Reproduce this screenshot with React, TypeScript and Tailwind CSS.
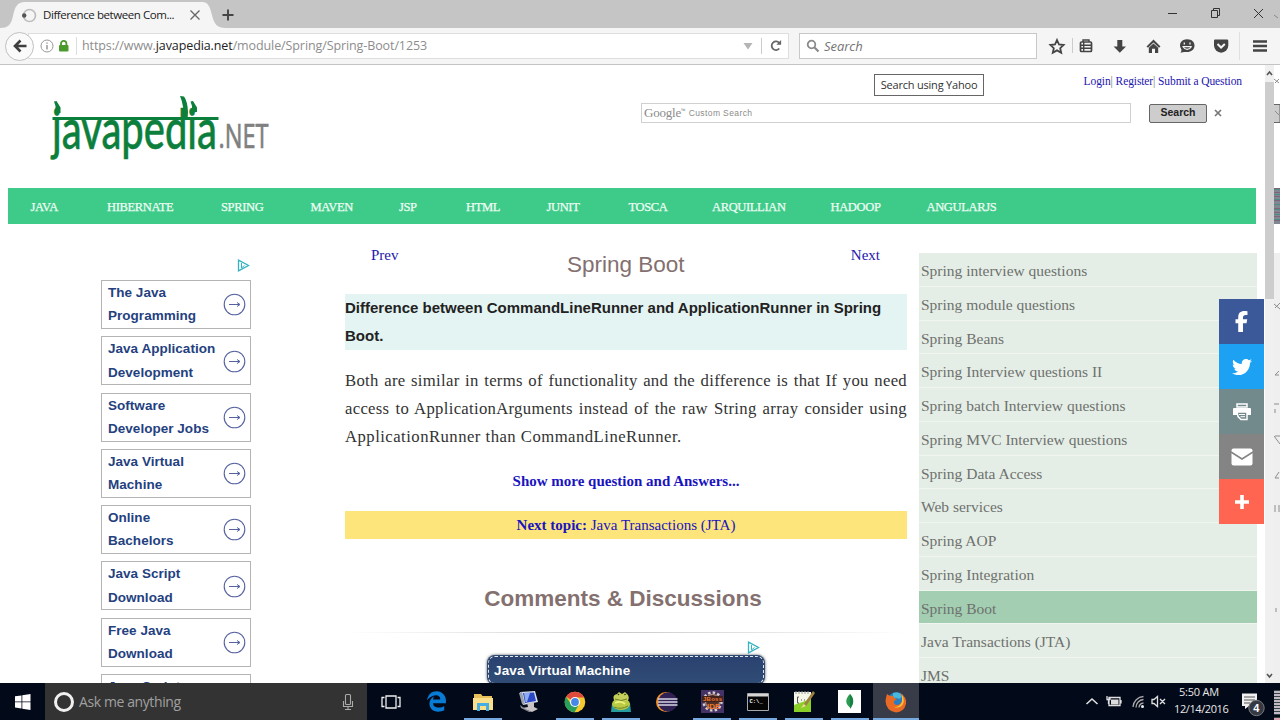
import type { ReactNode } from "react";
import { FaEdgeLegacy, FaFacebookF, FaTwitter } from "react-icons/fa6";

const navItems = ["JAVA", "HIBERNATE", "SPRING", "MAVEN", "JSP", "HTML", "JUNIT", "TOSCA", "ARQUILLIAN", "HADOOP", "ANGULARJS"];

const adLinks = [
  ["The Java", "Programming"],
  ["Java Application", "Development"],
  ["Software", "Developer Jobs"],
  ["Java Virtual", "Machine"],
  ["Online", "Bachelors"],
  ["Java Script", "Download"],
  ["Free Java", "Download"],
  ["Java Script"],
];

const modules = [
  "Spring interview questions",
  "Spring module questions",
  "Spring Beans",
  "Spring Interview questions II",
  "Spring batch Interview questions",
  "Spring MVC Interview questions",
  "Spring Data Access",
  "Web services",
  "Spring AOP",
  "Spring Integration",
  "Spring Boot",
  "Java Transactions (JTA)",
  "JMS",
];

function TabBar() {
  return (
    <div className="relative flex h-7 shrink-0 items-center bg-[#c5c5c5]">
      <svg className="absolute left-0 top-0" width="226" height="28" viewBox="0 0 226 28">
        <path d="M0 28C8 28 11 25 13 16C15 7 17 2 25 2H202C209 2 210 8 212 15C214 24 217 28 226 28Z" fill="#f5f5f5" />
      </svg>
      <div className="relative flex h-7 w-full items-center pl-[22px] pt-[2px]">
        <svg width="15" height="15" viewBox="0 0 15 15" fill="none">
          <circle cx="7.5" cy="7.5" r="6" stroke="#bdbdbd" strokeWidth="1.7" />
          <circle cx="2.2" cy="7.5" r="2.2" fill="#555" />
        </svg>
        <span className="ml-[6px] w-[146px] whitespace-nowrap text-[11.5px] tracking-[-0.43px] text-[#222]">Difference between Com...</span>
        <svg width="12" height="12" viewBox="0 0 12 12" stroke="#666" strokeWidth="1.3">
          <path d="M1.5 1.5L10.5 10.5M10.5 1.5L1.5 10.5" />
        </svg>
        <svg className="ml-[21px]" width="12" height="12" viewBox="0 0 12 12" stroke="#444" strokeWidth="1.9">
          <path d="M6 0.5V11.5M0.5 6H11.5" />
        </svg>
        <svg className="-mt-[5px] ml-auto" width="114" height="16" viewBox="0 0 114 16" fill="none" stroke="#333" strokeWidth="1">
          <path d="M2 8.5H11M45.500 5.500H51.500V12.500H45.500ZM47.500 5.500V3.500H53.500V10.500H51.500M88 4L97 13M97 4L88 13" />
          <path d="M108 10L112 13" stroke="#888" />
        </svg>
      </div>
    </div>
  );
}

function ToolbarIcons() {
  return (
    <svg className="ml-[11px]" width="232" height="34" viewBox="1048 29 232 34" fill="none" stroke="#444">
      <path d="M1057 40L1059 44.5L1063.6 45L1060.2 48.2L1061.2 52.8L1057 50.4L1052.8 52.8L1053.8 48.2L1050.4 45L1055 44.5Z" strokeWidth="1.8" />
      <path d="M1072.5 38V53" stroke="#ccc" />
      <rect x="1080.5" y="42" width="11" height="9.5" rx="1" strokeWidth="1.7" />
      <path d="M1083 42V40H1089V42M1080.5 45.2H1091.5M1080.5 48.3H1091.5M1083.7 42V51" strokeWidth="1.4" />
      <path d="M1117.3 40H1122.3V46.5H1126L1119.8 52.8L1113.6 46.5H1117.3Z" fill="#444" stroke="none" />
      <path d="M1153.5 39.5L1160.5 46.5L1159 47.7L1153.5 42.5L1148 47.7L1146.5 46.5Z" fill="#444" stroke="none" />
      <path d="M1148.8 47.8L1153.5 43.5L1158.2 47.8V53H1155V48.7H1152V53H1148.8Z" fill="#444" stroke="none" />
      <path d="M1187.2 39.3C1192 39.3 1194.5 42.2 1194.5 45.7C1194.5 49.5 1191 52 1187.2 52C1185 52 1184 52 1180.4 52.8C1181.5 51.5 1181.5 50.5 1181.3 49.3C1178 44 1181.5 39.3 1187.2 39.3Z" fill="#444" stroke="none" />
      <path d="M1184.3 42.5V44.5M1190 42.5V44.5M1182.5 46.7H1191.8" stroke="#f5f5f5" strokeWidth="1.3" />
      <path d="M1183.3 47C1185 50.2 1189.5 50.2 1191 47" stroke="#f5f5f5" strokeWidth="1.1" />
      <path d="M1215 39.6H1227Q1228.3 39.6 1228.3 41V45.5A7 7 0 0 1 1214 45.5V41Q1214 39.6 1215 39.6Z" fill="#444" stroke="none" />
      <path d="M1217.5 44L1221.1 47.5L1224.8 44" stroke="#f5f5f5" strokeWidth="2" />
      <path d="M1253 41.5H1267M1253 46H1267M1253 50.5H1267" strokeWidth="2.5" />
      <path d="M1239.500 32V60" stroke="#e0e0e0" />
    </svg>
  );
}

function Toolbar() {
  return (
    <div className="flex h-[37px] shrink-0 items-center border-b border-[#c4c4c4] bg-[#f5f5f5] pl-[5px]">
      <div className="z-10 flex size-[29px] shrink-0 items-center justify-center rounded-full border border-[#c0c0c0] bg-[#fafafa]">
        <svg width="14" height="14" viewBox="0 0 14 14" fill="none" stroke="#3f3f3f" strokeWidth="2.6">
          <path d="M7.5 1.5L2 7L7.5 12.5M2.5 7H13.5" />
        </svg>
      </div>
      <div className="-ml-[6px] flex h-[26px] w-[761px] shrink-0 items-center border border-[#dedede] bg-white pl-[11px]">
        <svg width="30" height="16" viewBox="0 0 30 16" fill="none">
          <circle cx="7" cy="8" r="6" stroke="#999" />
          <path d="M7 7V11.5M7 4.5V5.8" stroke="#888" strokeWidth="1.3" />
          <path d="M21 8V5.5A2.7 2.7 0 0 1 26.4 5.5V8" stroke="#4a9a2c" strokeWidth="1.8" />
          <rect x="19" y="7" width="9.5" height="6.5" rx="1" fill="#4a9a2c" />
        </svg>
        <div className="ml-[6px] h-[18px] w-px bg-[#ddd]" />
        <span className="ml-[5px] mt-px whitespace-nowrap text-[12.5px] tracking-[-0.1px] text-[#8d8d8d]">
          https://www.<span className="text-[#222]">javapedia.net</span>/module/Spring/Spring-Boot/1253
        </span>
        <svg className="ml-auto mr-[-1px]" width="46" height="20" viewBox="0 0 46 20" fill="none">
          <path d="M0.500 7H9.500L5 13.500Z" fill="#b5b5b5" />
          <path d="M18.500 2V18" stroke="#ccc" />
          <path d="M36.300 7A4.300 4.300 0 1 0 36.300 12.500" stroke="#666" strokeWidth="1.800" />
          <path d="M33.300 8.800H38.100V4Z" fill="#666" />
        </svg>
      </div>
      <div className="ml-[10px] flex h-[26px] w-[238px] shrink-0 items-center border border-[#c8c8c8] bg-white pl-[6px]">
        <svg width="14" height="14" viewBox="0 0 14 14" fill="none" stroke="#8a8a8a">
          <circle cx="5.500" cy="5.500" r="3.800" strokeWidth="1.800" />
          <path d="M8.300 8.300L12.500 12.500" strokeWidth="2.200" />
        </svg>
        <span className="ml-[4px] mt-px text-[13px] italic tracking-[-0.050px] text-[#757575]">Search</span>
      </div>
      <ToolbarIcons />
    </div>
  );
}

function Logo() {
  return (
    <svg className="ml-[40px] mt-[20px]" width="230" height="84" viewBox="48 85 230 84">
      <text x="52" y="148.500" fontSize="56" fontFamily="Lato, sans-serif" fontWeight="500" fill="#0d7f3d" stroke="#0d7f3d" strokeWidth="0.500" textLength="165" lengthAdjust="spacingAndGlyphs">javapedia</text>
      <path d="M52.500 118.600H218.500" stroke="#0d7f3d" strokeWidth="3" />
      <path d="M54 101.500L56.500 101L60.500 107.500V113H55.500V106ZM190.500 101.500L193 101L197 107.500V112H192V106ZM180 96L184 96.500Q187.500 101 188 112L187.500 120H183.800Q184 105 180 96Z" fill="#0d7f3d" />
      <text x="218.500" y="148" fontSize="33" fontFamily="Open Sans, sans-serif" fill="#808080" stroke="#808080" strokeWidth="0.700" textLength="50" lengthAdjust="spacingAndGlyphs">.NET</text>
    </svg>
  );
}

function PageHeader() {
  return (
    <div className="flex h-[123px] shrink-0 justify-between">
      <Logo />
      <div className="flex w-[616px] flex-col pl-[8px]">
        <div className="flex h-[31px] items-start justify-between pl-[225px]">
          <div className="mt-[9px] flex h-[22px] w-[110px] items-center justify-center whitespace-nowrap border border-[#666] bg-white text-[11px] tracking-[-0.200px] text-[#333]">
            Search using Yahoo
          </div>
          <div className="mr-[15px] mt-[7px] whitespace-nowrap font-['Liberation_Serif',serif] text-[11.500px] leading-[18px] tracking-[-0.100px] text-[#777]">
            <span className="text-[#2416b0]">Login</span>| <span className="text-[#2416b0]">Register</span>| <span className="text-[#2416b0]">Submit a Question</span>
          </div>
        </div>
        <div className="mt-[7px] flex items-center">
          <div className="-ml-[8px] flex h-[20px] w-[490px] shrink-0 items-center border border-[#d0d0d0] bg-white pl-[2px] text-[#8b8b8b]">
            <span className="font-['Liberation_Serif',serif] text-[13px] tracking-[-0.200px]">Google</span>
            <span className="-mt-[4px] text-[6px]">™</span>
            <span className="ml-[3px] mt-px font-['Liberation_Sans',sans-serif] text-[8.500px] tracking-[0.400px]">Custom Search</span>
          </div>
          <div className="ml-[18px] flex h-[19px] w-[58px] shrink-0 items-center justify-center rounded-[2px] border border-[#666] bg-[#cdcdcd] font-['Liberation_Sans',sans-serif] text-[10.500px] font-bold text-[#222]">Search</div>
          <svg className="ml-[7px]" width="8" height="8" viewBox="0 0 8 8" stroke="#777" strokeWidth="1.700">
            <path d="M1 1L7 7M7 1L1 7" />
          </svg>
        </div>
      </div>
    </div>
  );
}

function AdChoices() {
  return (
    <svg width="13" height="13" viewBox="0 0 13 13" fill="none" stroke="#35b3c4" strokeWidth="1.300">
      <path d="M1.500 1.200V11.800L11.500 6.500Z" />
      <path d="M4.500 4V9L7.500 6.500" strokeWidth="1" />
    </svg>
  );
}

function AdColumn() {
  return (
    <div className="flex w-[150px] shrink-0 flex-col pt-[35px]">
      <div className="flex h-[21px] justify-end pr-[1px]">
        <AdChoices />
      </div>
      <div className="flex flex-col gap-[7.250px]">
        {adLinks.map(([a, b], i) => (
          <div key={i} className="flex h-[49px] shrink-0 justify-between border border-[#b4b4b4] pl-[6px] pr-[4px] font-['Liberation_Sans',sans-serif] text-[13.500px] font-bold leading-[23.400px] text-[#24417f]">
            <div className="whitespace-nowrap tracking-[0.030px]">
              <div>{a}</div>
              <div>{b}</div>
            </div>
            <svg className="mt-[12.400px]" width="23" height="23" viewBox="0 0 23 23" fill="none" stroke="#5663a0">
              <circle cx="11.500" cy="11.500" r="10.300" strokeWidth="1.100" />
              <path d="M6 11.500H16.500M14 9.500L17 11.500L14 13.500" strokeWidth="1" />
            </svg>
          </div>
        ))}
      </div>
    </div>
  );
}

function Article() {
  return (
    <div className="ml-[94px] flex w-[562px] shrink-0 flex-col font-['Liberation_Serif',serif] text-[#333]">
      <div className="flex h-[70px] justify-between pl-[26px] pr-[27px] pt-[20px] text-[15px] leading-[22px] text-[#2416b0]">
        <span>Prev</span>
        <h1 className="ml-[2px] mt-[6px] font-['Liberation_Sans',sans-serif] text-[22.500px] leading-[29px] text-[#83706f]">Spring Boot</h1>
        <span>Next</span>
      </div>
      <h2 className="h-[56px] bg-[#e4f4f2] font-['Liberation_Sans',sans-serif] text-[15px] font-bold leading-[28px] text-[#222]">
        Difference between CommandLineRunner and ApplicationRunner in Spring Boot.
      </h2>
      <div className="mt-[17px] whitespace-nowrap text-[16.700px] leading-[28px]">
        <p className="tracking-[0.300px] [text-align-last:justify]">Both are similar in terms of functionality and the difference is that If you need</p>
        <p className="tracking-[0.300px] [text-align-last:justify]">access to ApplicationArguments instead of the raw String array consider using</p>
        <p className="tracking-[0.470px]">ApplicationRunner than CommandLineRunner.</p>
      </div>
      <div className="mt-[16px] text-center text-[15px] font-bold leading-[28px] text-[#1a14c0]">Show more question and Answers...</div>
      <div className="mt-[16px] h-[28px] bg-[#fde57b] text-center text-[15px] leading-[28px] text-[#1a14c0]">
        <b>Next topic:</b> Java Transactions (JTA)
      </div>
      <h2 className="mt-[46px] pr-[6px] text-center font-['Liberation_Sans',sans-serif] text-[22.500px] font-bold leading-[28px] text-[#83706f]">Comments &amp; Discussions</h2>
      <div className="mt-[19px] h-px w-full bg-linear-to-r from-transparent via-[#ccc] to-transparent" />
      <div className="flex justify-end pr-[147px] pt-[8px]">
        <AdChoices />
      </div>
      <div className="ml-[142px] mt-[1px] h-[30px] w-[278px] shrink-0 rounded-[8px] bg-[#2e4a74] p-px shadow-[0_0_3px_#555]">
        <div className="h-full rounded-[7px] border-[1.500px] border-dashed border-[#dfe5ee] bg-linear-to-b from-[#2a4270] to-[#304c75] pl-[5px] font-['Liberation_Sans',sans-serif] text-[13.500px] font-bold leading-[27px] tracking-[0.150px] text-white">
          Java Virtual Machine
        </div>
      </div>
    </div>
  );
}

function ModuleList() {
  return (
    <div className="ml-[12px] mt-[29px] w-[338px] shrink-0 font-['Liberation_Serif',serif] text-[15.500px] text-[#6e716e]">
      {modules.map((m) => (
        <div
          key={m}
          className={`h-[33.750px] whitespace-nowrap border-b border-[#f0f5f0] pl-[2px] leading-[35px] ${m === "Spring Boot" ? "bg-[#a3ceb2]" : "bg-[#e5eee6]"}`}
        >
          {m}
        </div>
      ))}
    </div>
  );
}

function ShareBar() {
  return (
    <div className="absolute left-[1219px] top-[299px] flex w-[45px] flex-col text-white">
      <div className="flex h-[45px] items-center justify-center bg-[#3b5998]"><FaFacebookF size={21} /></div>
      <div className="flex h-[45px] items-center justify-center bg-[#1da1f2]"><FaTwitter size={20} /></div>
      <div className="flex h-[45px] items-center justify-center bg-[#738a8d]">
        <svg width="20" height="18" viewBox="0 0 20 18" fill="none">
          <path d="M5 1H15V4H5Z" stroke="white" strokeWidth="1.500" />
          <path d="M2 5H18Q19 5 19 6V12H1V6Q1 5 2 5Z" fill="white" />
          <path d="M5 9H15V16.500H9L6 13.500Z" fill="#738a8d" stroke="white" strokeWidth="1.500" />
          <path d="M7 11.500H13M8.500 13.700H13" stroke="white" />
        </svg>
      </div>
      <div className="flex h-[45px] items-center justify-center bg-[#848484]">
        <svg width="22" height="18" viewBox="0 0 22 18">
          <rect x="0.500" y="0.500" width="21" height="17" rx="2" fill="white" />
          <path d="M0 4L11 11L22 4" fill="none" stroke="#848484" strokeWidth="1.500" />
        </svg>
      </div>
      <div className="flex h-[45px] items-center justify-center bg-[#ff6550]">
        <svg width="16" height="16" viewBox="0 0 16 16" stroke="white" strokeWidth="3.600"><path d="M8 1V15M1 8H15" /></svg>
      </div>
    </div>
  );
}

function Scrollbar() {
  return (
    <div className="flex w-[9px] shrink-0 flex-col items-center justify-between bg-[#f0f0f0]">
      <div className="flex w-full flex-col items-center">
        <svg className="my-[5px]" width="7" height="7" viewBox="0 0 7 7" fill="none" stroke="#555" strokeWidth="1.600"><path d="M1 5L3.500 2L6 5" /></svg>
        <div className="h-[217px] w-full bg-[#cdcdcd]" />
      </div>
      <svg className="mb-[4px]" width="7" height="7" viewBox="0 0 7 7" fill="none" stroke="#555" strokeWidth="1.600"><path d="M1 2L3.500 5L6 2" /></svg>
    </div>
  );
}

function EdgeStrip() {
  return (
    <svg className="shrink-0" width="6" height="618" viewBox="1274 65 6 618" fill="none">
      <path d="M1274 65H1280V683H1274Z" fill="#fff" />
      <path d="M1274 253H1280V683H1274Z" fill="#efefef" />
      <path d="M1274 104.500H1280V122.500H1274" fill="#ccc" stroke="#666" />
      <path d="M1277 188V224" stroke="#808790" strokeWidth="6" />
      <path d="M1277 188V224" stroke="#7d6480" strokeWidth="6" strokeDasharray="1 3" />
      <path d="M1277 189V224" stroke="#4d8c83" strokeWidth="6" strokeDasharray="1 4" />
      <path d="M1274 79L1279 83M1279 79L1275 83M1275 111L1279 115M1274 304L1280 309M1280 303L1275 308M1279 371L1275 375H1279M1274 404H1279M1275 409V413M1274 436L1280 444M1280 436H1275M1279 472L1275 478H1279M1275 505V512M1279 505V512M1276 608V612" stroke="#8d8d8d" />
    </svg>
  );
}

function TaskIcon({ children, running = false, active = false }: { children: ReactNode; running?: boolean; active?: boolean }) {
  return (
    <div className={`flex h-[37px] w-[45.900px] shrink-0 flex-col items-center ${active ? "bg-[#383c49]" : ""}`}>
      <div className="flex h-[35px] items-center justify-center pt-[2px]">{children}</div>
      <div className={`h-[2px] ${active ? "w-full" : "w-[38px]"} ${running || active ? "bg-[#76a9df]" : ""}`} />
    </div>
  );
}

function Taskbar() {
  return (
    <div className="flex h-[37px] shrink-0 bg-[#020918] text-white">
      <div className="flex w-[45px] shrink-0 items-center justify-center">
        <svg width="16" height="16" viewBox="0 0 16 16" fill="white"><path d="M0 2.300L6.500 1.400V7.500H0ZM7.300 1.300L15.500 0V7.500H7.300ZM0 8.300H6.500V14.500L0 13.600ZM7.300 8.300H15.500V16L7.300 14.700Z" /></svg>
      </div>
      <div className="flex w-[322px] shrink-0 items-center bg-[#333] pl-[9px] pr-[12px]">
        <div className="size-[20px] rounded-full border-[3px] border-[#f0f0f0]" />
        <span className="ml-[5px] text-[14px] tracking-[-0.400px] text-[#a0a0a0]">Ask me anything</span>
        <svg className="ml-auto" width="14" height="18" viewBox="0 0 14 18" fill="none" stroke="#aaa" strokeWidth="1.100">
          <rect x="4.500" y="1.500" width="5" height="10" rx="1" />
          <path d="M2.500 8V13.500H11.500V8M7 13.500V16.500M4 16.500H10" />
        </svg>
      </div>
      <div className="flex w-[47px] shrink-0 items-center justify-center">
        <svg width="20" height="16" viewBox="0 0 20 16" fill="none" stroke="#eee" strokeWidth="1.300">
          <path d="M5 2H15V14H5ZM3.500 3.500H1V12.500H3.500M16.500 3.500H19V12.500H16.500" />
        </svg>
      </div>
      <TaskIcon><FaEdgeLegacy size={21} color="#087bd5" /></TaskIcon>
      <TaskIcon running>
        <svg width="20" height="20" viewBox="0 0 20 20">
          <path d="M1 2H8L9.500 4H19V18H1Z" fill="#e8c05a" />
          <path d="M0 6H20V18H0Z" fill="#fbe08b" />
          <path d="M4 19V11H16V19H13V14H7V19Z" fill="#46aee3" />
        </svg>
      </TaskIcon>
      <TaskIcon>
        <svg width="22" height="23" viewBox="0 0 22 23">
          <path d="M2 2L17 1L20 12L5 15Z" fill="#d9dfed" />
          <path d="M5 3L16 2.500L18 11L7 13Z" fill="#2a48c8" />
          <path d="M6 3L12 3L9 12L7.500 12Z" fill="#8eabef" />
          <path d="M1 3L4 2L7 15L4 14Z" fill="#9a9fae" />
          <path d="M9 13L16 12V17L20 19L14 22L4 18L10 17Z" fill="#c8c4c5" />
          <path d="M2 15L9 20L14 22L11 22L3 18Z" fill="#8d8b92" />
        </svg>
      </TaskIcon>
      <TaskIcon running>
        <svg width="22" height="22" viewBox="0 0 22 22">
          <circle cx="11" cy="11" r="10.300" fill="#f5c82e" />
          <path d="M11 11L2 5.800A10.300 10.300 0 0 1 20.200 6.500H11Z" fill="#de4a3b" />
          <path d="M2 5.800A10.300 10.300 0 0 0 10.500 21.300L15 13.500L11 11L7 13Z" fill="#2a9f5c" />
          <circle cx="11" cy="11" r="5" fill="white" />
          <circle cx="11" cy="11" r="3.900" fill="#4787e8" />
        </svg>
      </TaskIcon>
      <TaskIcon running>
        <svg width="22" height="22" viewBox="0 0 22 22">
          <path d="M2 12H20L21 21H1Z" fill="#279c9c" />
          <ellipse cx="11" cy="13" rx="9" ry="6" fill="#b9c943" />
          <path d="M4 9Q2 4 7 3L9 1L12 3L15 1L18 4Q20 8 17 10Z" fill="#c3cf58" />
          <path d="M5 8Q11 11 17 8M4 16Q11 19 18 15" stroke="#71832c" strokeWidth="1" fill="none" />
          <circle cx="8.500" cy="3.500" r="0.800" fill="#283513" />
          <circle cx="15" cy="3.500" r="0.800" fill="#283513" />
          <path d="M5 12Q11 9 15 13" stroke="#eaf07a" strokeWidth="1.800" fill="none" />
        </svg>
      </TaskIcon>
      <TaskIcon>
        <svg width="23" height="22" viewBox="0 0 23 22">
          <circle cx="11" cy="11" r="10" fill="#f0922c" />
          <circle cx="12.800" cy="11" r="9.700" fill="#302154" />
          <path d="M3 8H22.500M3 11H22.500M3 14H22.500" stroke="#d5d5e3" strokeWidth="1.600" />
        </svg>
      </TaskIcon>
      <TaskIcon running>
        <svg width="23" height="23" viewBox="0 0 23 23">
          <path d="M0 0H23V23H0Z" fill="#443266" />
          <circle cx="11.500" cy="11.500" r="9" fill="none" stroke="#d8ceca" strokeWidth="2.500" strokeDasharray="2.500 2.200" />
          <circle cx="11.500" cy="11.500" r="7" fill="#503026" stroke="#c2a18a" />
          <path d="M1 6H22V12H1Z" fill="#40221d" />
          <text x="2" y="11" fontSize="6" fontFamily="Liberation Sans, sans-serif" fontWeight="bold" fill="#ee7730" textLength="19">JBoss</text>
          <text x="6" y="19" fontSize="8" fontFamily="Liberation Sans, sans-serif" fontWeight="bold" fill="#ef792d">IDE</text>
        </svg>
      </TaskIcon>
      <TaskIcon running>
        <svg width="22" height="18" viewBox="0 0 22 18">
          <path d="M0.500 0.500H21.500V17.500H0.500Z" fill="#050505" stroke="#aaa" />
          <path d="M1 1H21V3.500H1Z" fill="#d5d5d5" />
          <text x="2.500" y="9.500" fontSize="5.500" fontFamily="Liberation Mono, monospace" fontWeight="bold" fill="white">C:\_</text>
        </svg>
      </TaskIcon>
      <TaskIcon running>
        <svg width="22" height="23" viewBox="0 0 22 23">
          <path d="M1 2H18V22H1Z" fill="#f5f8e8" />
          <path d="M1 15L18 9V22H1Z" fill="#8bcf29" />
          <path d="M3 1V4M6 1V4M9 1V4M12 1V4M15 1V4" stroke="#999" />
          <path d="M6 7H4.500V13H6M8 10H9M11 10H12" stroke="#555" fill="none" />
          <path d="M20 1L22 3L13 16L10 17L11 14Z" fill="#9d8242" />
          <path d="M8 18L11 14L13 16Z" fill="#f1df98" />
        </svg>
      </TaskIcon>
      <TaskIcon running>
        <svg width="23" height="23" viewBox="0 0 23 23">
          <path d="M0 0H23V23H0Z" fill="white" />
          <path d="M12 4C7 9 7 14 12 17.500C16 14 16.500 9 12 4Z" fill="#2a9c50" />
          <path d="M12 4V19C16 14 16.500 9 12 4Z" fill="#188043" />
        </svg>
      </TaskIcon>
      <TaskIcon active>
        <svg width="22" height="22" viewBox="0 0 22 22">
          <circle cx="11.500" cy="10" r="9" fill="#297fc0" />
          <path d="M8 2Q14 0 18 5L14 8Q11 6 8 7Z" fill="#49b9db" />
          <path d="M2 3L5 5Q9 4 9 7L12 8L9 10Q8 14 13 14Q18 12 17 6L15 2Q22 6 21 13Q19 21 11 21.500Q1 20 0.500 10Q1 6 2 3Z" fill="#e96a24" />
          <path d="M17 4Q20 8 18 13Q15 18 9 16Q15 16 17 11Z" fill="#f8c13e" />
        </svg>
      </TaskIcon>
      <div className="flex grow items-center">
        <svg className="ml-auto" width="84" height="24" viewBox="1084 690 84 24" fill="none" stroke="#e0e0e0" strokeWidth="1.300">
          <path d="M1086.500 704L1092 699L1097.500 704" strokeWidth="1.600" />
          <path d="M1109 697.500H1120V705.500H1109ZM1121 700V703.500M1107 696V699.500H1110V697M1108.500 700V704" />
          <path d="M1111 699.500H1118.500V704.500H1111Z" fill="#ddd" stroke="none" />
          <path d="M1133 707A11 11 0 0 1 1143.500 696.500M1136 707.500A8 8 0 0 1 1143.500 699.500M1139 707.500A5 5 0 0 1 1143.500 703" stroke="#aaa" />
          <circle cx="1142.500" cy="706.500" r="1.500" fill="#eee" stroke="none" />
          <path d="M1152 699.500H1154L1157.500 696.500V706.500L1154 703.500H1152ZM1160 699L1165 704M1165 699L1160 704" />
        </svg>
        <div className="-mt-[3px] ml-[6px] w-[55px] whitespace-nowrap text-[11px] leading-[17px] tracking-[-0.400px] text-[#e8e8e8]">
          <div className="pl-[5px] tracking-[-0.200px]">5:50 AM</div>
          <div>12/14/2016</div>
        </div>
        <svg className="ml-[11px]" width="40" height="37" viewBox="1240 683 40 37">
          <path d="M1242 693.500H1257V706H1249L1245 709V706H1242Z" fill="#f0f0f0" />
          <path d="M1244 697H1255M1244 700H1255M1244 703H1250" stroke="#555" />
          <circle cx="1256.500" cy="708" r="7.700" fill="#343944" stroke="#777" />
          <text x="1253.300" y="712" fontSize="11" fontFamily="Liberation Sans, sans-serif" fontWeight="bold" fill="white">4</text>
          <path d="M1274 690H1280V714H1274Z" fill="#c1b8c8" />
          <path d="M1277 690V720" stroke="#35443c" strokeWidth="6" strokeDasharray="1 2" />
          <path d="M1277 718V720" stroke="#dba1b0" strokeWidth="6" />
        </svg>
      </div>
    </div>
  );
}

export default function App() {
  return (
    <div className="relative flex h-[720px] w-[1280px] flex-col overflow-hidden bg-white font-['Open_Sans',sans-serif]">
      <TabBar />
      <Toolbar />
      <div className="flex h-[618px] shrink-0 overflow-hidden">
        <div className="flex w-[1265px] shrink-0 flex-col overflow-hidden px-[8px]">
          <PageHeader />
          <nav className="grid h-[36px] w-[1248px] shrink-0 grid-cols-[76.500px_114px_89.500px_88.500px_67px_80.500px_82px_83.500px_118.500px_96px_auto] items-center bg-[#3ecb89] pl-[22.500px] pt-[2px] font-['Liberation_Serif',serif] text-[12.500px] tracking-[-0.350px] text-[#effcf5] [-webkit-text-stroke:0.250px_#effcf5]">
            {navItems.map((n) => (
              <a key={n}>{n}</a>
            ))}
          </nav>
          <div className="flex items-start pl-[93px]">
            <AdColumn />
            <Article />
            <ModuleList />
          </div>
        </div>
        <Scrollbar />
        <EdgeStrip />
      </div>
      <Taskbar />
      <ShareBar />
    </div>
  );
}
